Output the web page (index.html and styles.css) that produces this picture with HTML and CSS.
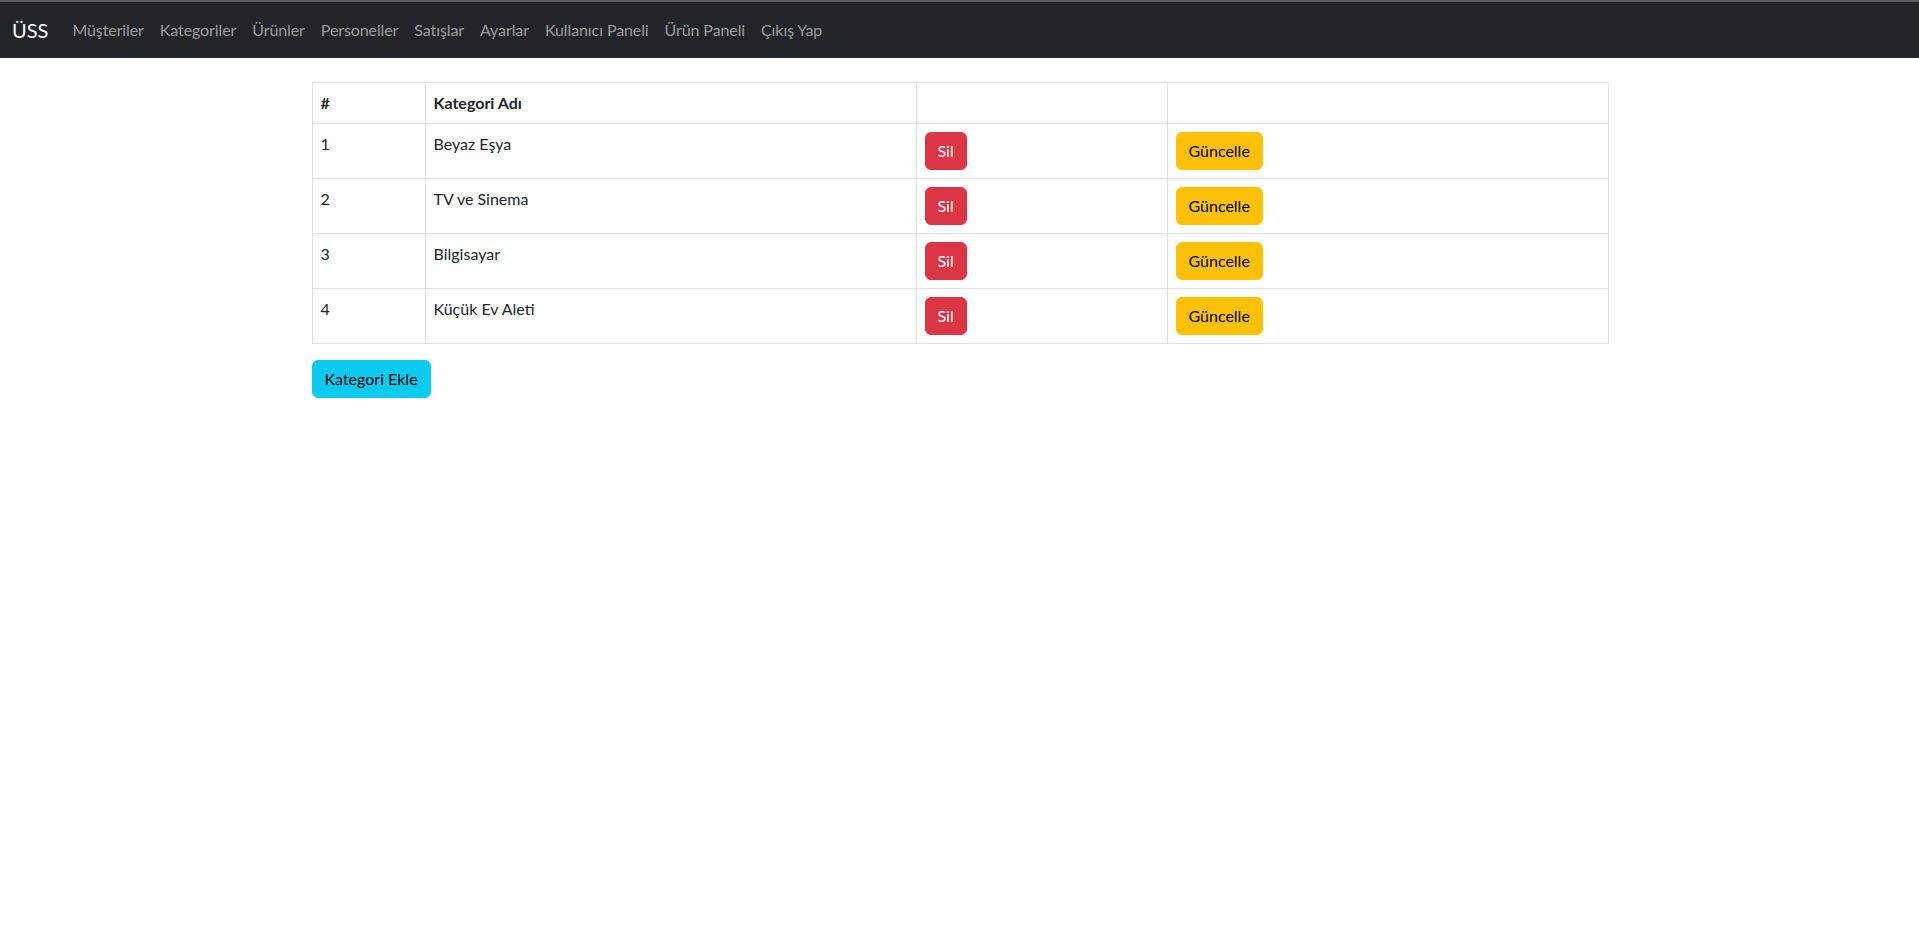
FILE: index.html
```html
<!DOCTYPE html>
<html lang="tr">
<head>
<meta charset="utf-8">
<title>Kategoriler</title>
<link rel="stylesheet" href="styles.css">
</head>
<body>
<nav class="navbar">
  <a class="brand" href="#">ÜSS</a>
  <ul class="nav">
    <li><a href="#">Müşteriler</a></li>
    <li><a href="#">Kategoriler</a></li>
    <li><a href="#">Ürünler</a></li>
    <li><a href="#">Personeller</a></li>
    <li><a href="#">Satışlar</a></li>
    <li><a href="#">Ayarlar</a></li>
    <li><a href="#">Kullanıcı Paneli</a></li>
    <li><a href="#">Ürün Paneli</a></li>
    <li><a href="#">Çıkış Yap</a></li>
  </ul>
</nav>
<main class="container">
  <table class="table">
    <colgroup>
      <col class="c-id">
      <col class="c-name">
      <col class="c-del">
      <col class="c-upd">
    </colgroup>
    <thead>
      <tr><th>#</th><th>Kategori Adı</th><th></th><th></th></tr>
    </thead>
    <tbody>
      <tr><td>1</td><td>Beyaz Eşya</td><td><a class="btn btn-danger" href="#">Sil</a></td><td><a class="btn btn-warning" href="#">Güncelle</a></td></tr>
      <tr><td>2</td><td>TV ve Sinema</td><td><a class="btn btn-danger" href="#">Sil</a></td><td><a class="btn btn-warning" href="#">Güncelle</a></td></tr>
      <tr><td>3</td><td>Bilgisayar</td><td><a class="btn btn-danger" href="#">Sil</a></td><td><a class="btn btn-warning" href="#">Güncelle</a></td></tr>
      <tr><td>4</td><td>Küçük Ev Aleti</td><td><a class="btn btn-danger" href="#">Sil</a></td><td><a class="btn btn-warning" href="#">Güncelle</a></td></tr>
    </tbody>
  </table>
  <a class="btn btn-info" href="#">Kategori Ekle</a>
</main>
</body>
</html>
```

FILE: styles.css
```css
* { box-sizing: border-box; }
html, body {
  margin: 0;
  padding: 0;
}
body {
  font-family: Lato, "Noto Sans", sans-serif;
  font-size: 16px;
  line-height: 1.5;
  color: #212529;
  background: #fff;
  border-top: 2px solid #5a5d61;
}
a { text-decoration: none; }

.navbar {
  display: flex;
  align-items: center;
  background: #212529;
  padding: 8px 12px;
  height: 56px;
}
.brand {
  color: #fff;
  font-size: 20px;
  line-height: 30px;
  padding: 5px 0;
  margin-right: 16px;
}
.nav {
  display: flex;
  list-style: none;
  margin: 0;
  padding: 0;
}
.nav a {
  display: block;
  color: rgba(255, 255, 255, 0.55);
  padding: 8px;
  line-height: 24px;
  letter-spacing: -0.1px;
}

.container {
  width: 1320px;
  padding: 0 12px;
  margin: 24px auto 0;
}
.table {
  width: 100%;
  border-collapse: collapse;
  table-layout: fixed;
  margin-bottom: 16px;
  vertical-align: top;
}
.c-id { width: 113px; }
.c-name { width: 491px; }
.c-del { width: 251px; }
.c-upd { width: 441px; }
.table th, .table td {
  border: 1px solid #dee2e6;
  padding: 8px;
  text-align: left;
  vertical-align: top;
}
.table th { font-weight: 700; }

.btn {
  display: inline-block;
  padding: 6px 12px;
  font-size: 16px;
  line-height: 24px;
  border: 1px solid transparent;
  border-radius: 6px;
}
.btn-danger { background: #dc3545; border-color: #dc3545; color: #fff; }
.btn-warning { background: #ffc107; border-color: #ffc107; color: #000; }
.btn-info { background: #0dcaf0; border-color: #0dcaf0; color: #000; }
```
